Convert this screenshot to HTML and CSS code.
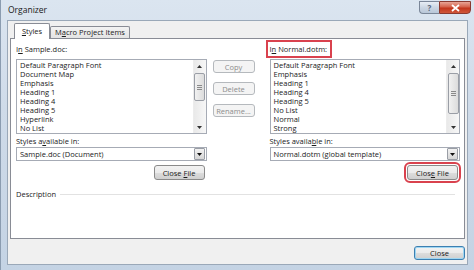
FILE: index.html
```html
<!DOCTYPE html>
<html lang="en">
<head>
    <meta charset="UTF-8">
    <title>Organizer</title>
    <link rel="stylesheet" href="styles.css">
</head>
<body>
    <div class="window">
        <div class="titlebar">
            <span class="title">Organizer</span>
            <div class="caption-buttons">
                <div class="cap-btn help">?</div>
                <div class="cap-btn close">
                    <svg width="9" height="8" viewBox="0 0 9 8"><path d="M1 1 L8 7 M8 1 L1 7" stroke="#fff" stroke-width="1.8"/></svg>
                </div>
            </div>
        </div>

        <div class="client">
            <div class="tabs">
                <div class="tab active"><u>S</u>tyles</div>
                <div class="tab">M<u>a</u>cro Project Items</div>
            </div>

            <div class="panel">
                <div class="columns">
                    <!-- left side -->
                    <div class="side">
                        <div class="label">I<u>n</u> Sample.doc:</div>
                        <div class="listbox">
                            <ul class="items">
                                <li>Default Paragraph Font</li>
                                <li>Document Map</li>
                                <li>Emphasis</li>
                                <li>Heading 1</li>
                                <li>Heading 4</li>
                                <li>Heading 5</li>
                                <li>Hyperlink</li>
                                <li>No List</li>
                            </ul>
                            <div class="scrollbar">
                                <div class="arrow"><svg width="5" height="3" viewBox="0 0 5 3"><path d="M0 3 L2.5 0 L5 3Z" fill="#333"/></svg></div>
                                <div class="thumb thumb-left"><span class="grip"></span></div>
                                <div class="track"></div>
                                <div class="arrow"><svg width="5" height="3" viewBox="0 0 5 3"><path d="M0 0 L2.5 3 L5 0Z" fill="#333"/></svg></div>
                            </div>
                        </div>
                        <div class="label small">Styles a<u>v</u>ailable in:</div>
                        <div class="select">
                            <span>Sample.doc (Document)</span>
                            <div class="drop"><svg width="5" height="3" viewBox="0 0 5 3"><path d="M0 0 L2.5 3 L5 0Z" fill="#111"/></svg></div>
                        </div>
                        <div class="btn-row">
                            <button class="btn">Close <u>F</u>ile</button>
                        </div>
                    </div>

                    <!-- middle buttons -->
                    <div class="middle">
                        <button class="btn disabled">Copy</button>
                        <button class="btn disabled">Delete</button>
                        <button class="btn disabled">Rename...</button>
                    </div>

                    <!-- right side -->
                    <div class="side">
                        <div class="label"><span class="marked">I<u>n</u> Normal.dotm:</span></div>
                        <div class="listbox">
                            <ul class="items">
                                <li>Default Paragraph Font</li>
                                <li>Emphasis</li>
                                <li>Heading 1</li>
                                <li>Heading 4</li>
                                <li>Heading 5</li>
                                <li>No List</li>
                                <li>Normal</li>
                                <li>Strong</li>
                            </ul>
                            <div class="scrollbar">
                                <div class="arrow"><svg width="5" height="3" viewBox="0 0 5 3"><path d="M0 3 L2.5 0 L5 3Z" fill="#333"/></svg></div>
                                <div class="thumb thumb-right"><span class="grip"></span></div>
                                <div class="track"></div>
                                <div class="arrow"><svg width="5" height="3" viewBox="0 0 5 3"><path d="M0 0 L2.5 3 L5 0Z" fill="#333"/></svg></div>
                            </div>
                        </div>
                        <div class="label small">Styles availa<u>b</u>le in:</div>
                        <div class="select">
                            <span>Normal.dotm (global template)</span>
                            <div class="drop"><svg width="5" height="3" viewBox="0 0 5 3"><path d="M0 0 L2.5 3 L5 0Z" fill="#111"/></svg></div>
                        </div>
                        <div class="btn-row">
                            <button class="btn marked-btn">Clos<u>e</u> File</button>
                        </div>
                    </div>
                </div>

                <div class="description">Description</div>
            </div>

            <div class="footer">
                <button class="btn default">Close</button>
            </div>
        </div>
    </div>
</body>
</html>
```

FILE: styles.css
```css
* {
    margin: 0;
    padding: 0;
    box-sizing: border-box;
}

body {
    width: 474px;
    height: 270px;
    overflow: hidden;
    background: #dfe8f2;
    font-family: "Open Sans", "Noto Sans", sans-serif;
    font-size: 7.5px;
    color: #1b1b1b;
}

.window {
    width: 474px;
    height: 270px;
    padding: 0 6px 5px 6px;
    border-left: 1px solid #8b9cb0;
    background: linear-gradient(to bottom, #dbe5f0 0%, #cfdbe9 40%, #c4d3e4 100%);
    display: flex;
    flex-direction: column;
}

.titlebar {
    height: 20px;
    display: flex;
    justify-content: space-between;
    align-items: flex-start;
}

.title {
    margin-top: 4px;
    padding-left: 1px;
    font-size: 8.5px;
    color: #202020;
}

.caption-buttons {
    display: flex;
    margin-top: 1px;
    margin-right: -3px;
}

.cap-btn {
    height: 13px;
    display: flex;
    align-items: center;
    justify-content: center;
    border: 1px solid #7a8698;
}

.cap-btn.help {
    width: 20px;
    border-right: none;
    border-radius: 0 0 0 4px;
    background: linear-gradient(to bottom, #e8eef5 0%, #cbd6e3 50%, #b9c7d8 100%);
    color: #56657a;
    font-size: 8px;
    font-weight: bold;
}

.cap-btn.close {
    width: 32px;
    border-color: #8a3a30;
    border-radius: 0 0 4px 0;
    background: linear-gradient(to bottom, #e8a596 0%, #d4624b 45%, #c2361c 55%, #d0573a 100%);
}

.client {
    flex: 1;
    background: #f0f0f0;
    border: 1px solid #9aa8b8;
    padding: 1px 2px 0 2px;
    display: flex;
    flex-direction: column;
}

.tabs {
    display: flex;
    align-items: flex-end;
    padding-left: 4px;
    height: 17px;
    position: relative;
    z-index: 1;
    margin-bottom: -1px;
}

.tab {
    height: 12px;
    padding: 0 4px;
    line-height: 11px;
    border: 1px solid #898c95;
    border-bottom: none;
    background: linear-gradient(to bottom, #f3f3f3, #e3e3e3);
    margin-left: -1px;
    margin-bottom: 1px;
    border-radius: 2px 2px 0 0;
}

.tab.active {
    width: 36px;
    height: 16px;
    line-height: 14px;
    text-align: center;
    padding: 0;
    background: #fff;
    margin-bottom: 0;
    margin-left: 0;
    margin-right: 1px;
}

.panel {
    height: 201px;
    background: #fff;
    border: 1px solid #898c95;
    padding: 4px 4px 0 5px;
}

.columns {
    display: flex;
}

.side {
    width: 191px;
    display: flex;
    flex-direction: column;
}

.label {
    height: 12px;
    line-height: 12px;
    margin-bottom: 4px;
}

.label.small {
    margin: 2px 0 0 0;
    height: 11px;
    line-height: 10px;
}

.marked {
    outline: 2px solid #d9424e;
    outline-offset: 2px;
    padding-right: 1px;
}

.listbox {
    height: 75px;
    border: 1px solid #a6abb5;
    display: flex;
}

.items {
    flex: 1;
    list-style: none;
    padding: 1px 3px;
}

.items li {
    height: 9px;
    line-height: 9px;
    white-space: nowrap;
}

.scrollbar {
    width: 13px;
    background: linear-gradient(to right, #e9e9e9, #f7f7f7);
    border-left: 1px solid #ececec;
    display: flex;
    flex-direction: column;
    align-items: center;
}

.arrow {
    height: 12px;
    display: flex;
    align-items: center;
    justify-content: center;
}

.thumb {
    width: 11px;
    margin-top: 1px;
    border: 1px solid #9a9ea6;
    border-radius: 2px;
    background: linear-gradient(to right, #f1f1f1, #dcdcdc);
    display: flex;
    align-items: center;
    justify-content: center;
}

.thumb-left {
    height: 28px;
}

.thumb-right {
    height: 41px;
}

.grip {
    width: 5px;
    height: 5px;
    border-top: 1px solid #8a8a8a;
    border-bottom: 1px solid #8a8a8a;
    background: linear-gradient(to bottom, transparent 40%, #8a8a8a 40%, #8a8a8a 60%, transparent 60%);
}

.track {
    flex: 1;
}

.select {
    height: 14px;
    border: 1px solid #a6abb5;
    display: flex;
    align-items: center;
    padding-left: 3px;
}

.select span {
    flex: 1;
}

.drop {
    width: 11px;
    height: 12px;
    margin-right: 1px;
    border: 1px solid #9a9ea6;
    border-radius: 1px;
    background: linear-gradient(to bottom, #f2f2f2, #d6d6d6);
    display: flex;
    align-items: center;
    justify-content: center;
}

.btn-row {
    display: flex;
    justify-content: flex-end;
    padding-right: 2px;
    margin-top: 4px;
}

.btn {
    width: 51px;
    height: 15px;
    font-family: inherit;
    font-size: 7.5px;
    color: #1b1b1b;
    border: 1px solid #8a8a8a;
    border-radius: 3px;
    background: linear-gradient(to bottom, #f2f2f2 0%, #ebebeb 50%, #dddddd 51%, #cfcfcf 100%);
}

.marked-btn {
    outline: 2px solid #d9424e;
    outline-offset: 1px;
}

.middle {
    width: 42px;
    margin: 17px 15px 0 6px;
    display: flex;
    flex-direction: column;
    gap: 9px;
}

.btn.disabled {
    width: 42px;
    height: 13px;
    color: #8d8d8d;
    border-color: #b5b9bd;
    background: #f4f4f4;
}

.description {
    margin-top: 8px;
    height: 12px;
    line-height: 12px;
    display: flex;
    align-items: center;
    padding-right: 5px;
}

.description::after {
    content: "";
    flex: 1;
    margin-left: 4px;
    border-top: 1px solid #e2e2e2;
}

.footer {
    display: flex;
    justify-content: flex-end;
    margin-top: 7px;
}

.btn.default {
    height: 14px;
    border-color: #3c7fb1;
    box-shadow: inset 0 0 0 1px #9fd6f2;
}
```
